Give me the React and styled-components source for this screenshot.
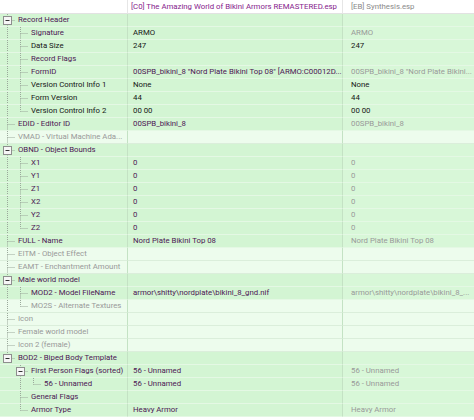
import React from "react";
import styled, { createGlobalStyle } from "styled-components";

const Global = createGlobalStyle`
  html, body { margin: 0; padding: 0; background: #ffffff; }
  body { font-family: Roboto, "Open Sans", sans-serif; }
`;

const C = {
  purple: "#4c1654",
  dark: "#151515",
  gray: "#999999",
  head: "#86228c",
};

const rows = [
  { lv: 0, box: true, label: "Record Header", lc: C.purple },
  { lv: 1, label: "Signature", lc: C.purple, a: "ARMO", ac: C.dark, b: "ARMO", bc: C.gray },
  { lv: 1, label: "Data Size", lc: C.dark, a: "247", ac: C.dark, b: "247", bc: C.dark },
  { lv: 1, label: "Record Flags", lc: C.purple },
  { lv: 1, label: "FormID", lc: C.purple, a: "00SPB_bikini_8 \"Nord Plate Bikini Top 08\" [ARMO:C00012D...", ac: C.purple, b: "00SPB_bikini_8 \"Nord Plate Bikini...", bc: C.gray },
  { lv: 1, label: "Version Control Info 1", lc: C.dark, a: "None", ac: C.dark, b: "None", bc: C.dark },
  { lv: 1, label: "Form Version", lc: C.dark, a: "44", ac: C.dark, b: "44", bc: C.dark },
  { lv: 1, label: "Version Control Info 2", lc: C.dark, a: "00 00", ac: C.dark, b: "00 00", bc: C.dark, last: true },
  { lv: 0, label: "EDID - Editor ID", lc: C.purple, a: "00SPB_bikini_8", ac: C.purple, b: "00SPB_bikini_8", bc: C.gray },
  { lv: 0, label: "VMAD - Virtual Machine Ada...", lc: C.gray, pale: true },
  { lv: 0, box: true, label: "OBND - Object Bounds", lc: C.purple },
  { lv: 1, label: "X1", lc: C.purple, a: "0", ac: C.purple, b: "0", bc: C.gray },
  { lv: 1, label: "Y1", lc: C.purple, a: "0", ac: C.purple, b: "0", bc: C.gray },
  { lv: 1, label: "Z1", lc: C.purple, a: "0", ac: C.purple, b: "0", bc: C.gray },
  { lv: 1, label: "X2", lc: C.purple, a: "0", ac: C.purple, b: "0", bc: C.gray },
  { lv: 1, label: "Y2", lc: C.purple, a: "0", ac: C.purple, b: "0", bc: C.gray },
  { lv: 1, label: "Z2", lc: C.purple, a: "0", ac: C.purple, b: "0", bc: C.gray, last: true },
  { lv: 0, label: "FULL - Name", lc: C.purple, a: "Nord Plate Bikini Top 08", ac: C.purple, b: "Nord Plate Bikini Top 08", bc: C.gray },
  { lv: 0, label: "EITM - Object Effect", lc: C.gray, pale: true },
  { lv: 0, label: "EAMT - Enchantment Amount", lc: C.gray, pale: true },
  { lv: 0, box: true, label: "Male world model", lc: C.purple },
  { lv: 1, label: "MOD2 - Model FileName", lc: C.purple, a: "armor\\shitty\\nordplate\\bikini_8_gnd.nif", ac: C.purple, b: "armor\\shitty\\nordplate\\bikini_8_...", bc: C.gray },
  { lv: 1, label: "MO2S - Alternate Textures", lc: C.gray, pale: true, last: true },
  { lv: 0, label: "Icon", lc: C.gray, pale: true },
  { lv: 0, label: "Female world model", lc: C.gray, pale: true },
  { lv: 0, label: "Icon 2 (female)", lc: C.gray, pale: true },
  { lv: 0, box: true, label: "BOD2 - Biped Body Template", lc: C.purple, last: true },
  { lv: 1, box: true, label: "First Person Flags (sorted)", lc: C.purple, a: "56 - Unnamed", ac: C.purple, b: "56 - Unnamed", bc: C.gray },
  { lv: 2, label: "56 - Unnamed", lc: C.purple, a: "56 - Unnamed", ac: C.purple, b: "56 - Unnamed", bc: C.gray, last: true },
  { lv: 1, label: "General Flags", lc: C.purple },
  { lv: 1, label: "Armor Type", lc: C.purple, a: "Heavy Armor", ac: C.purple, b: "Heavy Armor", bc: C.gray, last: true },
];

const withGuides = rows.map((r, i) => {
  const guides = [];
  for (let l = 0; l <= r.lv; l++) {
    let cont = false;
    for (let j = i + 1; j < rows.length; j++) {
      if (rows[j].lv < l) break;
      if (rows[j].lv === l) { cont = true; break; }
    }
    guides.push(cont);
  }
  return { ...r, guides };
});

const Grid = styled.div`
  display: grid;
  grid-template-columns: 128px 215px 131px;
  width: 474px;
  font-size: 7.8px;
  font-weight: 400;
  line-height: 13px;
`;

const HeadCell = styled.div`
  height: 14px;
  line-height: 13px;
  background: #ffffff;
  border-bottom: 1px solid #e2e2e2;
  border-right: ${(p) => (p.$sep ? "1px solid #e6e6e6" : "none")};
  color: ${(p) => p.$color};
  padding-left: ${(p) => p.$pad || 3}px;
  white-space: nowrap;
  overflow: hidden;
  box-sizing: border-box;
`;

const Cell = styled.div`
  height: 13px;
  box-sizing: border-box;
  background: ${(p) => (p.$pale ? "#edfced" : p.$alt ? "#d8f7d8" : "#d3f5d3")};
  border-bottom: 1px solid ${(p) => (p.$pale ? "#dbeedb" : "#e4f8e4")};
  border-right: ${(p) => (p.$sep ? "1px solid #c4e2c4" : "none")};
  color: ${(p) => p.$color || C.dark};
  white-space: nowrap;
  overflow: hidden;
  padding-left: ${(p) => p.$pad || 0}px;
  line-height: 12px;
  position: relative;
`;

const LabelText = styled.span`
  position: relative;
`;

const Tree = styled.svg`
  position: absolute;
  left: 0;
  top: 0;
  width: 60px;
  height: 13px;
  overflow: visible;
`;

function Guides({ r }) {
  const els = [];
  const lineColor = "#9aa89a";
  for (let l = 0; l < r.lv; l++) {
    if (r.guides[l]) {
      const x = 7.5 + l * 13;
      els.push(<line key={"v" + l} x1={x} y1={0} x2={x} y2={13} stroke={lineColor} strokeDasharray="1 1" />);
    }
  }
  const x = 7.5 + r.lv * 13;
  els.push(<line key="own-top" x1={x} y1={0} x2={x} y2={6.5} stroke={lineColor} strokeDasharray="1 1" />);
  if (r.guides[r.lv]) {
    els.push(<line key="own-bot" x1={x} y1={6.5} x2={x} y2={13} stroke={lineColor} strokeDasharray="1 1" />);
  }
  els.push(<line key="h" x1={x} y1={6.5} x2={x + 8} y2={6.5} stroke={lineColor} strokeDasharray="1 1" />);
  if (r.box) {
    els.push(
      <g key="box">
        <rect x={x - 4} y={2.5} width={8} height={8} fill="#f6f6f6" stroke="#8e8e8e" strokeWidth="1" />
        <line x1={x - 2} y1={6.5} x2={x + 2} y2={6.5} stroke="#333" strokeWidth="1" />
      </g>
    );
  }
  return <Tree viewBox="0 0 60 13">{els}</Tree>;
}

export default function App() {
  return (
    <>
      <Global />
      <Grid>
        <HeadCell $sep $color="#333"></HeadCell>
        <HeadCell $sep $color={C.head} $pad={3}>[C0] The Amazing World of Bikini Armors REMASTERED.esp</HeadCell>
        <HeadCell $color="#8a8a8a" $pad={8}>[EB] Synthesis.esp</HeadCell>
        {withGuides.map((r, i) => (
          <React.Fragment key={i}>
            <Cell $sep $pale={r.pale} $color={r.lc} $pad={18 + r.lv * 13}>
              <Guides r={r} />
              <LabelText>{r.label}</LabelText>
            </Cell>
            <Cell $sep $pale={r.pale} $color={r.ac} $pad={5}>{r.a}</Cell>
            <Cell $pale={r.pale} $alt $color={r.bc} $pad={8}>{r.b}</Cell>
          </React.Fragment>
        ))}
      </Grid>
    </>
  );
}
